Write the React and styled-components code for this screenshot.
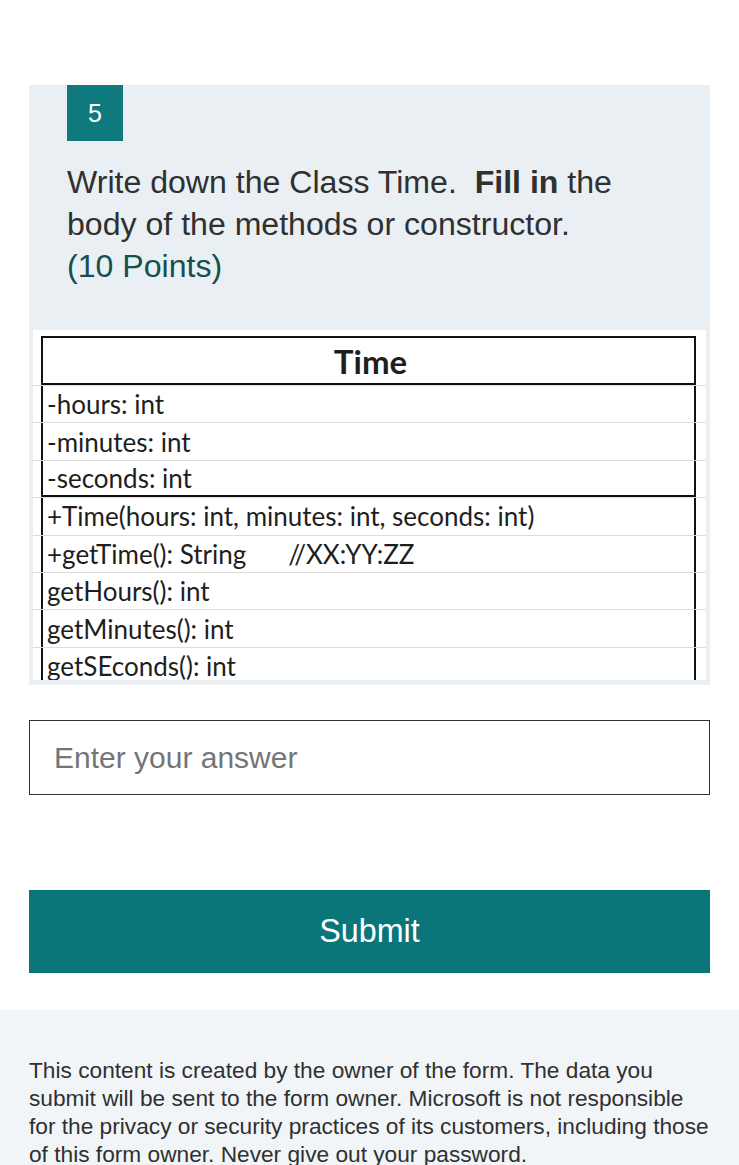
import React from 'react';
import styled, { createGlobalStyle } from 'styled-components';

const GlobalStyle = createGlobalStyle`
  html, body {
    margin: 0;
    padding: 0;
    background: #ffffff;
    font-family: "Liberation Sans", Arial, sans-serif;
  }
  * { box-sizing: border-box; }
`;

const Page = styled.div`
  padding-top: 85px;
`;

const Main = styled.div`
  padding: 0 29px;
`;

const QuestionCard = styled.div`
  background: #e9eff3;
  padding: 0 4px 5px 4px;
`;

const Badge = styled.div`
  width: 56px;
  height: 56px;
  margin-left: 34px;
  background: #0f7a7d;
  color: #ffffff;
  font-size: 25px;
  display: flex;
  align-items: center;
  justify-content: center;
`;

const QuestionText = styled.div`
  margin: 20px 40px 0 34px;
  font-size: 32.1px;
  line-height: 42px;
  color: #303030;
`;

const Points = styled.div`
  color: #164f4e;
`;

const Sheet = styled.div`
  margin-top: 43px;
  height: 350px;
  overflow: hidden;
  background: #ffffff;
  padding-top: 6px;
  font-family: Lato, "Open Sans", sans-serif;
  color: #1e1e1e;
`;

const SheetRow = styled.div`
  border-bottom: 1px solid #dcdcdc;
  padding: 0 10px 0 8px;
`;

const Cell = styled.div`
  height: ${({ $header }) => ($header ? '49px' : '36.4px')};
  border-left: 2.5px solid #111;
  border-right: 2.5px solid #111;
  border-top: ${({ $header }) => ($header ? '2.5px solid #111' : 'none')};
  border-bottom: ${({ $thick }) => ($thick ? '2.5px solid #111' : 'none')};
  display: flex;
  align-items: center;
  justify-content: ${({ $header }) => ($header ? 'center' : 'flex-start')};
  padding-left: 4px;
  font-size: ${({ $header }) => ($header ? '33px' : '26px')};
  font-weight: ${({ $header }) => ($header ? 700 : 400)};
  white-space: pre;
`;

const Comment = styled.span`
  margin-left: 42px;
`;

const AnswerBox = styled.input`
  display: block;
  width: 100%;
  height: 75px;
  margin-top: 35px;
  border: 1.5px solid #333;
  background: #ffffff;
  padding: 0 24px;
  font-family: "Liberation Sans", Arial, sans-serif;
  font-size: 30px;
  color: #333;
  outline: none;

  ::placeholder {
    color: #616161;
  }
`;

const SubmitButton = styled.button`
  display: block;
  width: 100%;
  height: 83px;
  margin-top: 95px;
  border: none;
  background: #0b767a;
  color: #ffffff;
  font-family: "Liberation Sans", Arial, sans-serif;
  font-size: 32.3px;
`;

const Footer = styled.div`
  margin-top: 37px;
  background: #f1f5f8;
  padding: 46px 26px 40px 29px;
  font-size: 22.7px;
  line-height: 28px;
  color: #303030;
`;

const fields = ['-hours: int', '-minutes: int', '-seconds: int'];
const methods = [
  '+Time(hours: int, minutes: int, seconds: int)',
  '+getTime(): String',
  'getHours(): int',
  'getMinutes(): int',
  'getSEconds(): int',
];

const App = () => {
  return (
    <Page>
      <GlobalStyle />
      <Main>
        <QuestionCard>
          <Badge>5</Badge>
          <QuestionText>
            Write down the Class Time.&nbsp; <b>Fill in</b> the body of the methods or constructor.
            <Points>(10 Points)</Points>
          </QuestionText>
          <Sheet>
            <SheetRow>
              <Cell $header $thick>Time</Cell>
            </SheetRow>
            {fields.map((f, i) => (
              <SheetRow key={f}>
                <Cell $thick={i === fields.length - 1}>{f}</Cell>
              </SheetRow>
            ))}
            {methods.map((m, i) => (
              <SheetRow key={m}>
                <Cell>
                  {m}
                  {i === 1 && <Comment>//XX:YY:ZZ</Comment>}
                </Cell>
              </SheetRow>
            ))}
          </Sheet>
        </QuestionCard>
        <AnswerBox placeholder="Enter your answer" />
        <SubmitButton>Submit</SubmitButton>
      </Main>
      <Footer>
        This content is created by the owner of the form. The data you submit will be sent to the form owner. Microsoft is not responsible for the privacy or security practices of its customers, including those of this form owner. Never give out your password.
      </Footer>
    </Page>
  );
};

export default App;
